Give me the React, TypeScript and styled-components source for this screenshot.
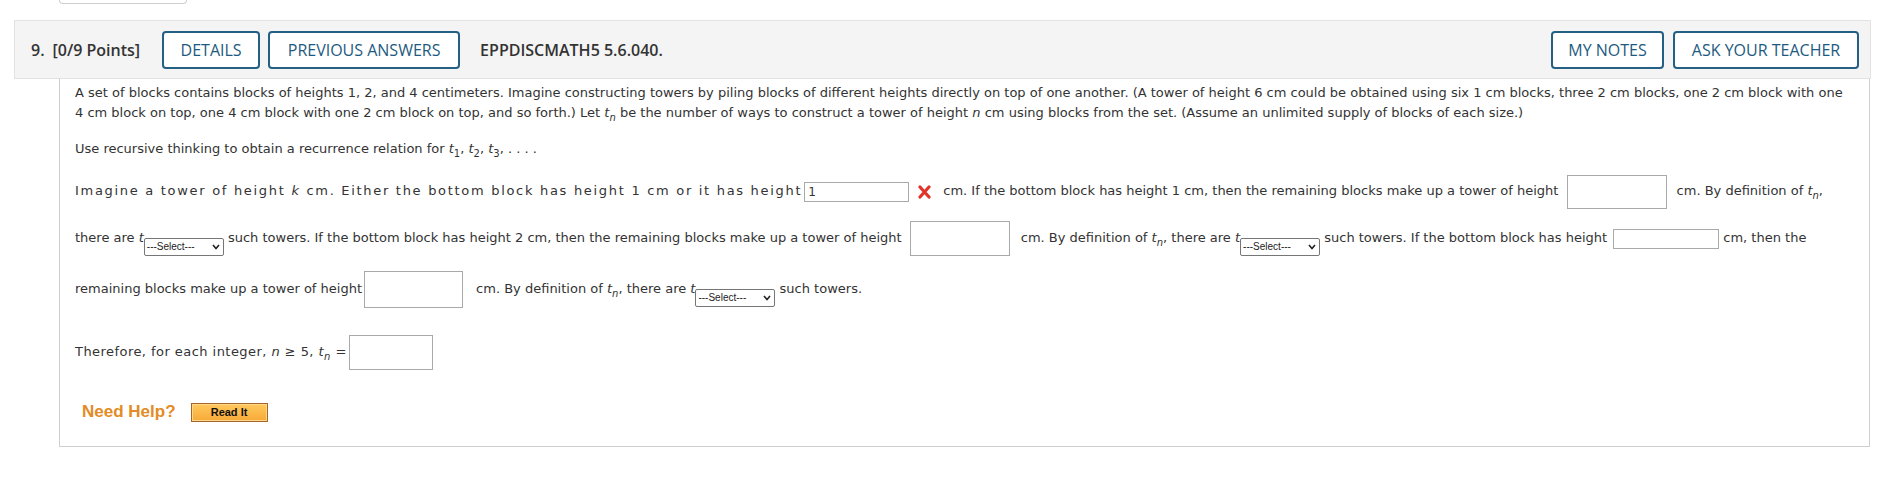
import React from "react";
import styled, { createGlobalStyle } from "styled-components";

const Global = createGlobalStyle`
  html, body { margin: 0; padding: 0; background: #ffffff; }
  body { font-family: Verdana, "DejaVu Sans", sans-serif; }
`;

const Page = styled.div`
  width: 1885px;
  display: flex;
  flex-direction: column;
`;

const TopStub = styled.div`
  margin-left: 59px;
  width: 126px;
  height: 3px;
  border: 1px solid #cfcfcf;
  border-top: none;
  border-radius: 0 0 4px 4px;
`;

const Header = styled.div`
  margin-top: 16px;
  margin-left: 14px;
  width: 1857px;
  height: 59px;
  box-sizing: border-box;
  background: #f4f4f4;
  border: 1px solid #e2e2e2;
  display: flex;
  align-items: center;
  padding: 0 11px 0 16px;
  font-family: "Open Sans", sans-serif;
`;

const QNum = styled.span`
  font-size: 16px;
  font-weight: 600;
  color: #333;
  margin-right: 8px;
`;

const Points = styled.span`
  font-size: 16px;
  font-weight: 600;
  color: #333;
  margin-right: 22px;
`;

const HButton = styled.button<{ $w: number; $ml?: number }>`
  width: ${(p) => p.$w}px;
  height: 38px;
  margin-left: ${(p) => p.$ml ?? 0}px;
  box-sizing: border-box;
  background: #ffffff;
  border: 2px solid #245f84;
  border-radius: 4px;
  color: #1d5a80;
  font-family: "Open Sans", sans-serif;
  font-size: 16px;
  font-weight: 500;
  padding: 0;
  display: flex;
  align-items: center;
  justify-content: center;
`;

const Code = styled.span`
  margin-left: 20px;
  font-size: 16px;
  font-weight: 600;
  color: #333;
`;

const Spacer = styled.div`
  flex: 1;
`;

const Panel = styled.div`
  margin-left: 59px;
  width: 1811px;
  box-sizing: border-box;
  border: 1px solid #cfcfcf;
  border-top: none;
  padding: 4px 0 24px 15px;
  color: #333;
  font-size: 13px;
`;

const Para = styled.div<{ $mt?: number }>`
  margin-top: ${(p) => p.$mt ?? 0}px;
  line-height: 20px;
  white-space: nowrap;
`;

const Row = styled.div<{ $mt: number; $h: number; $ls?: number }>`
  margin-top: ${(p) => p.$mt}px;
  height: ${(p) => p.$h}px;
  line-height: ${(p) => p.$h}px;
  white-space: nowrap;
  letter-spacing: ${(p) => p.$ls ?? 0}px;
`;

const Stretch = styled.span<{ $ls: number }>`
  letter-spacing: ${(p) => p.$ls}px;
`;

const I = styled.i`
  font-style: italic;
`;

const Sub = styled.sub<{ $it?: boolean }>`
  font-size: 10px;
  line-height: 0;
  vertical-align: -4px;
  font-style: ${(p) => (p.$it ? "italic" : "normal")};
`;

const Box = styled.span<{ $w: number; $h: number; $ml?: number; $mr?: number }>`
  display: inline-block;
  box-sizing: border-box;
  width: ${(p) => p.$w}px;
  height: ${(p) => p.$h}px;
  border: 1px solid #a9a9a9;
  background: #fff;
  vertical-align: middle;
  line-height: ${(p) => p.$h - 2}px;
  font-size: 12px;
  letter-spacing: 0;
  padding-left: 3px;
  margin: 0 ${(p) => p.$mr ?? 2}px 0 ${(p) => p.$ml ?? 2}px;
`;

const Select = styled.span`
  display: inline-flex;
  align-items: center;
  justify-content: space-between;
  box-sizing: border-box;
  width: 80px;
  height: 18px;
  border: 1px solid #767676;
  border-radius: 2px;
  background: #fff;
  vertical-align: -8px;
  font-family: "Liberation Sans", Arial, sans-serif;
  font-size: 10px;
  line-height: 16px;
  letter-spacing: 0;
  color: #222;
  padding: 0 3px 0 2px;
`;

const Cross = styled.svg`
  vertical-align: middle;
  margin: 0 12px 0 7px;
`;

const HelpRow = styled.div`
  margin-top: 32px;
  margin-left: 7px;
  height: 20px;
  display: flex;
  align-items: center;
`;

const Help = styled.span`
  font-family: "Liberation Sans", Arial, sans-serif;
  font-size: 17px;
  font-weight: bold;
  color: #e38b25;
  margin-right: 15px;
`;

const ReadIt = styled.button`
  width: 77px;
  height: 19px;
  box-sizing: border-box;
  border: 1px solid #a5652a;
  background: linear-gradient(#ffc95e, #f8a937);
  box-shadow: inset 0 0 0 1px #ffd98a;
  font-family: "Liberation Sans", Arial, sans-serif;
  font-size: 11px;
  font-weight: bold;
  color: #111;
  padding: 0;
`;

const Tn = () => (
  <>
    <I>t</I>
    <Sub $it>n</Sub>
  </>
);

const Sel = () => (
  <Select>
    <span>---Select---</span>
    <svg width="8" height="6" viewBox="0 0 8 6">
      <path d="M1 1 L4 4.5 L7 1" fill="none" stroke="#222" strokeWidth="1.6" />
    </svg>
  </Select>
);

const XMark = () => (
  <Cross width="13" height="14" viewBox="0 0 13 14">
    <path d="M2 2 L11 12 M11 2 L2 12" stroke="#e0342a" strokeWidth="3.2" strokeLinecap="round" />
  </Cross>
);

export default function App() {
  return (
    <Page>
      <Global />
      <TopStub />
      <Header>
        <QNum>9.</QNum>
        <Points>[0/9 Points]</Points>
        <HButton $w={98}>DETAILS</HButton>
        <HButton $w={192} $ml={8}>PREVIOUS ANSWERS</HButton>
        <Code>EPPDISCMATH5 5.6.040.</Code>
        <Spacer />
        <HButton $w={113}>MY NOTES</HButton>
        <HButton $w={186} $ml={9}>ASK YOUR TEACHER</HButton>
      </Header>
      <Panel>
        <Para>
          A set of blocks contains blocks of heights 1, 2, and 4 centimeters. Imagine constructing towers by piling blocks of different heights directly on top of one another. (A tower of height 6 cm could be obtained using six 1 cm blocks, three 2 cm blocks, one 2 cm block with one
          <br />
          4 cm block on top, one 4 cm block with one 2 cm block on top, and so forth.) Let <Tn /> be the number of ways to construct a tower of height <I>n</I> cm using blocks from the set. (Assume an unlimited supply of blocks of each size.)
        </Para>
        <Para $mt={16}>
          Use recursive thinking to obtain a recurrence relation for <I>t</I>
          <Sub>1</Sub>, <I>t</I>
          <Sub>2</Sub>, <I>t</I>
          <Sub>3</Sub>, . . . .
        </Para>
        <Row $mt={14} $h={36}>
          <Stretch $ls={1.7}>
            Imagine a tower of height <I>k</I> cm. Either the bottom block has height 1 cm or it has height
          </Stretch>
          <Box $w={105} $h={20}>1</Box>
          <XMark />
          cm. If the bottom block has height 1 cm, then the remaining blocks make up a tower of height
          <Box $w={100} $h={34} $ml={9} $mr={5} /> cm. By definition of <Tn />,
        </Row>
        <Row $mt={11} $h={36}>
          there are <I>t</I>
          <Sel /> such towers. If the bottom block has height 2 cm, then the remaining blocks make up a tower of height
          <Box $w={100} $h={35} $ml={8} $mr={7} /> cm. By definition of <Tn />, there are <I>t</I>
          <Sel /> such towers. If the bottom block has height
          <Box $w={106} $h={20} $ml={6} $mr={0} /> cm, then the
        </Row>
        <Row $mt={14} $h={38}>
          remaining blocks make up a tower of height
          <Box $w={99} $h={37} $mr={9} /> cm. By definition of <Tn />, there are <I>t</I>
          <Sel /> such towers.
        </Row>
        <Row $mt={26} $h={36} $ls={0.45}>
          Therefore, for each integer, <I>n</I> ≥ 5, <Tn /> =
          <Box $w={84} $h={35} />
        </Row>
        <HelpRow>
          <Help>Need Help?</Help>
          <ReadIt>Read It</ReadIt>
        </HelpRow>
      </Panel>
    </Page>
  );
}
